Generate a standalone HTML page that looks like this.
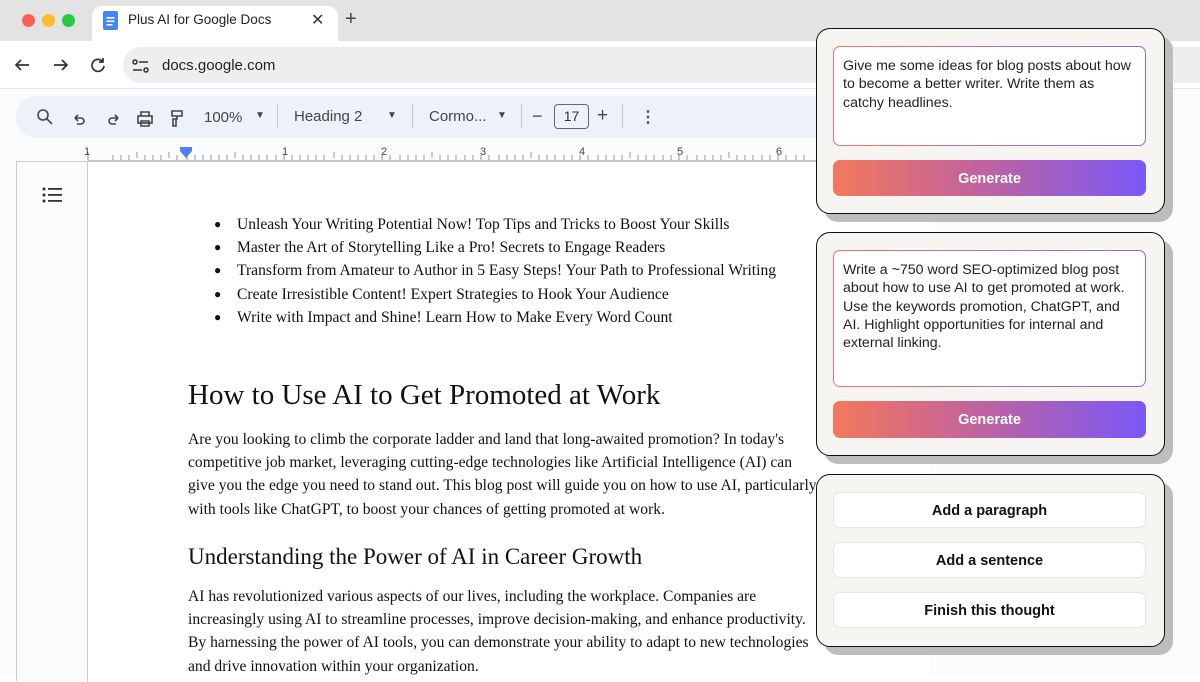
<!DOCTYPE html>
<html><head><meta charset="utf-8"><style>
*{box-sizing:border-box;margin:0;padding:0}
body{width:1200px;height:675px;overflow:hidden;background:#fff;font-family:"Liberation Sans",sans-serif;position:relative}
.abs{position:absolute}
.tabbar{left:0;top:0;width:1200px;height:41px;background:#e3e3e3}
.tab{left:92px;top:6px;width:246px;height:36px;background:#fff;border-radius:10px 10px 0 0}
.dot{width:13px;height:13px;border-radius:50%;top:14px}
.addr{left:0;top:41px;width:1200px;height:48px;background:#fff;border-bottom:1px solid #e6e6e6}
.url{left:123px;top:47px;width:1100px;height:36px;background:#efeded;border-radius:18px}
.docbg{left:0;top:89px;width:1200px;height:586px;background:#f9fbfd}
.toolbar{left:16px;top:96px;width:1000px;height:42px;background:#edf2fa;border-radius:21px;font-size:15px;color:#444}
.serif{font-family:"Liberation Serif",serif;color:#111;white-space:nowrap}
.card{background:#f6f5f2;border:1.5px solid #111;border-radius:14px;box-shadow:8px 8px 0 #bdbdbd}
.ta{background:#fff;border-radius:7px;padding:10px 9px;font-size:14.2px;line-height:18.3px;color:#222;border:1px solid transparent;background:linear-gradient(#fff,#fff) padding-box,linear-gradient(90deg,#f4775a,#7c6cf5) border-box}
.gen{border-radius:7px;background:linear-gradient(90deg,#f3785c,#c3639b 45%,#7a58f8);color:#fff;font-weight:bold;font-size:14.5px;text-align:center;line-height:38px}
.btn{background:#fff;border:1px solid #e4e4e4;border-radius:7px;font-weight:bold;font-size:14.5px;text-align:center;line-height:37px;color:#111}
.b{display:inline-block;width:25px;padding-left:2px;font-size:12px;line-height:0;vertical-align:1px}
</style></head><body>
<div class="abs tabbar"></div>
<div class="abs dot" style="left:22px;background:#fe5f57"></div>
<div class="abs dot" style="left:42px;background:#febc2e"></div>
<div class="abs dot" style="left:62px;background:#28c840"></div>
<div class="abs tab"></div>
<svg class="abs" style="left:103px;top:11px" width="15" height="19"><rect width="15" height="19" rx="2" fill="#4285f4"/><rect x="3.5" y="6" width="8" height="1.6" fill="#fff"/><rect x="3.5" y="9.5" width="8" height="1.6" fill="#fff"/><rect x="3.5" y="13" width="6" height="1.6" fill="#fff"/></svg>
<div class="abs" style="left:128px;top:12px;font-size:13.5px;color:#222">Plus AI for Google Docs</div>
<div class="abs" style="left:311px;top:10px;font-size:16px;color:#333">✕</div>
<div class="abs" style="left:345px;top:8px;font-size:20px;color:#444">+</div>
<div class="abs addr"></div>
<div class="abs url"></div>
<svg class="abs" style="left:13px;top:56px" width="100" height="18" fill="none" stroke="#333" stroke-width="1.7"><path d="M16 9H3M8 4 3 9l5 5"/><path d="M41 9h13M49 4l5 5-5 5"/><path d="M90 6a6 6 0 1 0 1 4M90 2v4h-4"/></svg>
<svg class="abs" style="left:131px;top:57px" width="20" height="18" fill="none" stroke="#333" stroke-width="1.5"><circle cx="4" cy="5" r="2"/><path d="M8 5h9M2 13h9"/><circle cx="15" cy="13" r="2"/></svg>
<div class="abs" style="left:162px;top:57px;font-size:15px;color:#222">docs.google.com</div>
<div class="abs docbg"></div>
<div class="abs toolbar"></div>
<svg class="abs" style="left:36px;top:108px" width="620" height="20" fill="none" stroke="#444" stroke-width="1.6">
<circle cx="7" cy="7" r="5"/><path d="M11 11l5 5"/>
<path d="M39 10h6a3 3 0 0 1 0 6h-4M39 10l3-3M39 10l3 3"/>
<path d="M82 10h-6a3 3 0 0 0 0 6h4M82 10l-3-3M82 10l-3 3"/>
<rect x="102" y="8" width="14" height="7"/><path d="M105 8V4h8v4M105 13h8v5h-8z"/>
<path d="M136 3h10v5h-10zM141 8v3h-4v7h3v-7"/>
</svg>
<div class="abs" style="left:204px;top:109px;font-size:15px;color:#444">100%</div>
<div class="abs" style="left:255px;top:110px;font-size:10px;color:#444">▼</div>
<div class="abs" style="left:277px;top:104px;width:1px;height:24px;background:#c7c7c7"></div>
<div class="abs" style="left:294px;top:108px;font-size:15px;color:#444">Heading 2</div>
<div class="abs" style="left:387px;top:110px;font-size:10px;color:#444">▼</div>
<div class="abs" style="left:412px;top:104px;width:1px;height:24px;background:#c7c7c7"></div>
<div class="abs" style="left:429px;top:108px;font-size:15px;color:#444">Cormo...</div>
<div class="abs" style="left:497px;top:110px;font-size:10px;color:#444">▼</div>
<div class="abs" style="left:521px;top:104px;width:1px;height:24px;background:#c7c7c7"></div>
<div class="abs" style="left:532px;top:106px;font-size:18px;color:#444">−</div>
<div class="abs" style="left:554px;top:104px;width:35px;height:25px;border:1.3px solid #666;border-radius:4px;font-size:14px;text-align:center;line-height:23px;color:#333">17</div>
<div class="abs" style="left:597px;top:105px;font-size:19px;color:#444">+</div>
<div class="abs" style="left:622px;top:104px;width:1px;height:24px;background:#c7c7c7"></div>
<div class="abs" style="left:640px;top:107px;font-size:16px;color:#444;font-weight:bold">⋮</div>
<svg class="abs" style="left:80px;top:142px" width="740" height="20">
<g stroke="#888" stroke-width="1"><path d="M8 19h732"/></g>
<g stroke="#999">
<path d="M8 10v8M33 13v5M41 13v5M49 13v5M57 10v6M65 13v5M73 13v5M81 13v5M89 10v6M97 13v5M107 13v5M115 13v5M123 13v5M131 13v5M139 13v5M147 13v5M155 10v6M163 13v5M171 13v5M179 13v5M187 13v5M196 13v5M204 13v5M212 13v5M220 13v5M228 13v5M236 13v5M244 13v5M254 10v6M262 13v5M270 13v5M278 13v5M286 13v5M294 13v5M302 13v5M310 13v5M320 13v5M328 13v5M336 13v5M344 13v5M352 10v6M360 13v5M368 13v5M376 13v5M385 13v5M393 13v5M401 13v5M409 13v5M419 13v5M427 13v5M435 13v5M443 13v5M451 10v6M459 13v5M467 13v5M475 13v5M484 13v5M492 13v5M500 13v5M508 13v5M518 13v5M526 13v5M534 13v5M542 13v5M550 10v6M558 13v5M566 13v5M574 13v5M583 13v5M591 13v5M599 13v5M607 13v5M617 13v5M625 13v5M633 13v5M641 13v5M649 10v6M657 13v5M665 13v5M673 13v5M682 13v5M690 13v5M698 13v5M706 13v5M716 13v5M724 13v5"/>
</g>
<path d="M100 5h12v4l-6 7-6-7z" fill="#4a80f0"/>
<g font-size="11" fill="#444" font-family="Liberation Sans"><text x="4" y="13">1</text><text x="202" y="13">1</text><text x="301" y="13">2</text><text x="400" y="13">3</text><text x="499" y="13">4</text><text x="597" y="13">5</text><text x="696" y="13">6</text></g>
</svg>
<div class="abs" style="left:16px;top:161px;width:914px;height:520px;background:#fff;border-left:1px solid #ccc;border-top:1px solid #ccc"></div>
<div class="abs" style="left:17px;top:162px;width:71px;height:520px;background:#f9fbfd;border-right:1px solid #ccc"></div>
<svg class="abs" style="left:42px;top:186px" width="22" height="18" fill="#333"><circle cx="2" cy="3" r="1.5"/><circle cx="2" cy="9" r="1.5"/><circle cx="2" cy="15" r="1.5"/><rect x="6" y="2" width="14" height="1.8"/><rect x="6" y="8" width="14" height="1.8"/><rect x="6" y="14" width="14" height="1.8"/></svg>
<div class="abs serif" style="left:212px;top:213px;font-size:15.6px;line-height:23.2px">
<div><span class="b">●</span>Unleash Your Writing Potential Now! Top Tips and Tricks to Boost Your Skills</div>
<div><span class="b">●</span>Master the Art of Storytelling Like a Pro! Secrets to Engage Readers</div>
<div><span class="b">●</span>Transform from Amateur to Author in 5 Easy Steps! Your Path to Professional Writing</div>
<div><span class="b">●</span>Create Irresistible Content! Expert Strategies to Hook Your Audience</div>
<div><span class="b">●</span>Write with Impact and Shine! Learn How to Make Every Word Count</div>
</div>
<div class="abs serif" style="left:188px;top:379px;font-size:29px">How to Use AI to Get Promoted at Work</div>
<div class="abs serif" style="left:188px;top:428px;font-size:15.6px;line-height:23.2px">
<div>Are you looking to climb the corporate ladder and land that long-awaited promotion? In today's</div>
<div>competitive job market, leveraging cutting-edge technologies like Artificial Intelligence (AI) can</div>
<div>give you the edge you need to stand out. This blog post will guide you on how to use AI, particularly</div>
<div>with tools like ChatGPT, to boost your chances of getting promoted at work.</div>
</div>
<div class="abs serif" style="left:188px;top:544px;font-size:23px">Understanding the Power of AI in Career Growth</div>
<div class="abs serif" style="left:188px;top:585px;font-size:15.6px;line-height:23.2px">
<div>AI has revolutionized various aspects of our lives, including the workplace. Companies are</div>
<div>increasingly using AI to streamline processes, improve decision-making, and enhance productivity.</div>
<div>By harnessing the power of AI tools, you can demonstrate your ability to adapt to new technologies</div>
<div>and drive innovation within your organization.</div>
</div>
<div class="abs card" style="left:816px;top:28px;width:349px;height:186px"></div>
<div class="abs ta" style="left:833px;top:46px;width:313px;height:100px">Give me some ideas for blog posts about how to become a better writer. Write them as catchy headlines.</div>
<div class="abs gen" style="left:833px;top:160px;width:313px;height:36px">Generate</div>
<div class="abs card" style="left:816px;top:232px;width:349px;height:224px"></div>
<div class="abs ta" style="left:833px;top:250px;width:313px;height:137px">Write a ~750 word SEO-optimized blog post about how to use AI to get promoted at work. Use the keywords promotion, ChatGPT, and AI. Highlight opportunities for internal and external linking.</div>
<div class="abs gen" style="left:833px;top:401px;width:313px;height:37px">Generate</div>
<div class="abs card" style="left:816px;top:474px;width:349px;height:173px"></div>
<div class="abs btn" style="left:833px;top:492px;width:313px;height:36px">Add a paragraph</div>
<div class="abs btn" style="left:833px;top:542px;width:313px;height:36px">Add a sentence</div>
<div class="abs btn" style="left:833px;top:592px;width:313px;height:36px">Finish this thought</div>
</body></html>
